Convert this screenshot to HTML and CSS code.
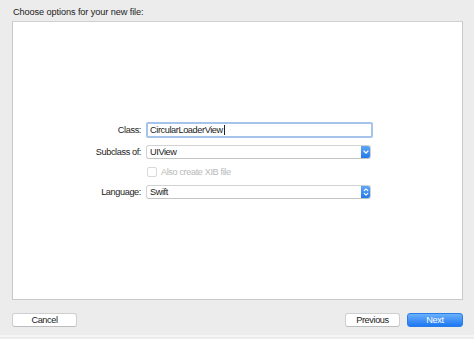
FILE: index.html
```html
<!DOCTYPE html>
<html>
<head>
<meta charset="utf-8">
<link rel="stylesheet" href="styles.css">
</head>
<body>
<div class="window">
  <div class="title">Choose options for your new file:</div>
  <div class="panel">
    <div class="form">
      <div class="label">Class:</div>
      <div class="field">CircularLoaderView<span class="caret"></span></div>

      <div class="label">Subclass of:</div>
      <div class="popup"><span class="value">UIView</span><span class="arrow"><svg width="10" height="14" viewBox="0 0 10 14"><path d="M3 6 L5 8.2 L7 6" fill="none" stroke="#fff" stroke-width="1.2" stroke-linecap="round" stroke-linejoin="round"/></svg></span></div>

      <div class="label"></div>
      <div class="check"><span class="box"></span><span>Also create XIB file</span></div>

      <div class="label">Language:</div>
      <div class="popup"><span class="value">Swift</span><span class="arrow"><svg width="10" height="14" viewBox="0 0 10 14"><path d="M3.2 5.6 L5 3.8 L6.8 5.6 M3.2 8.4 L5 10.2 L6.8 8.4" fill="none" stroke="#fff" stroke-width="1.1" stroke-linecap="round" stroke-linejoin="round"/></svg></span></div>
    </div>
  </div>
  <div class="footer">
    <div class="btn cancel">Cancel</div>
    <div class="spacer"></div>
    <div class="btn previous">Previous</div>
    <div class="btn next">Next</div>
  </div>
</div>
</body>
</html>
```

FILE: styles.css
```css
html, body {
  margin: 0;
  padding: 0;
}
body {
  width: 474px;
  height: 339px;
  background: #ececec;
  font-family: "Liberation Sans", Arial, sans-serif;
  font-size: 9.2px;
  letter-spacing: -0.4px;
  color: #262626;
  overflow: hidden;
}
.window {
  padding: 6px 11px 0 12px;
  height: 337px;
  box-sizing: border-box;
  border-bottom: 2px solid #f5f5f5;
}
.title {
  height: 15px;
  line-height: 13px;
  padding-left: 1px;
  color: #222;
  letter-spacing: -0.1px;
}
.panel {
  height: 279px;
  box-sizing: border-box;
  background: #fff;
  border: 1px solid #c9c9c9;
  border-top-color: #d0d0d0;
  padding-top: 100px;
}
.form {
  display: grid;
  grid-template-columns: 128px 227px;
  column-gap: 5px;
  grid-template-rows: 16px 15px 14px 14px;
  row-gap: 6px;
  align-items: center;
}
.label {
  text-align: right;
  color: #222;
}
.field {
  height: 16px;
  box-sizing: border-box;
  border: 2px solid #a4c4ec;
  border-radius: 2px;
  padding-left: 2px;
  line-height: 12px;
  display: flex;
  align-items: center;
  color: #1a1a1a;
}
.caret {
  display: inline-block;
  width: 1px;
  height: 10px;
  background: #222;
  margin-left: 1px;
}
.popup {
  width: 225px;
  height: 14px;
  box-sizing: border-box;
  border: 1px solid #d2d2d2;
  border-bottom-color: #c4c4c4;
  border-radius: 3px;
  background: #fff;
  display: flex;
  align-items: center;
  overflow: hidden;
}
.popup .value {
  flex: 1;
  padding-left: 3px;
  line-height: 12px;
  color: #1a1a1a;
}
.popup .arrow {
  width: 10px;
  height: 14px;
  margin: -1px -1px -1px 0;
  background: linear-gradient(#62aaf8, #1f76ec);
  border-radius: 0 3px 3px 0;
  display: flex;
  align-items: center;
  justify-content: center;
}
.check {
  display: flex;
  align-items: center;
  color: #b9b9b9;
  padding-left: 1px;
}
.box {
  width: 8px;
  height: 8px;
  border: 1px solid #d9d9d9;
  border-radius: 2px;
  margin-right: 4px;
  background: #fff;
}
.footer {
  display: flex;
  margin-top: 13px;
  align-items: center;
}
.spacer {
  flex: 1;
}
.btn {
  height: 14px;
  box-sizing: border-box;
  border-radius: 3px;
  text-align: center;
  line-height: 13px;
}
.cancel, .previous {
  background: #fff;
  border: 1px solid #cfcfcf;
  border-bottom-color: #bdbdbd;
  color: #222;
}
.cancel {
  width: 65px;
}
.previous {
  width: 55px;
  margin-right: 7px;
}
.next {
  width: 56px;
  background: linear-gradient(#6ab0fb, #1d78f2);
  border: 1px solid #2a7de6;
  color: #fff;
}
```
